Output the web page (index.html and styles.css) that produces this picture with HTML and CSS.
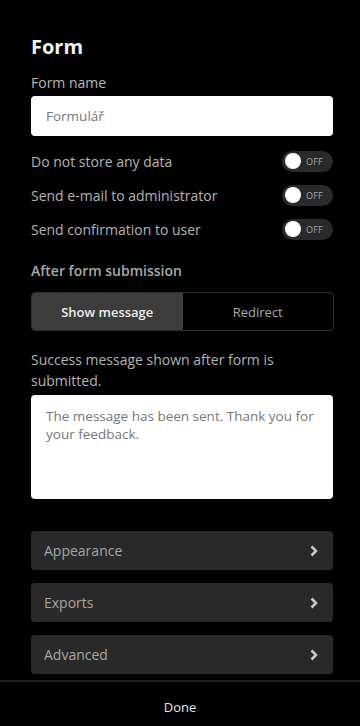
FILE: index.html
```html
<!DOCTYPE html>
<html lang="en">
<head>
<meta charset="utf-8">
<title>Form</title>
<link rel="stylesheet" href="styles.css">
</head>
<body>
<div class="screen">
  <main class="panel">
    <h1 class="title">Form</h1>
    <label class="label">Form name</label>
    <div class="input">Formulář</div>
    <div class="toggles">
      <div class="toggle-row"><span>Do not store any data</span><span class="switch"><span class="knob"></span><span class="off">OFF</span></span></div>
      <div class="toggle-row"><span>Send e-mail to administrator</span><span class="switch"><span class="knob"></span><span class="off">OFF</span></span></div>
      <div class="toggle-row"><span>Send confirmation to user</span><span class="switch"><span class="knob"></span><span class="off">OFF</span></span></div>
    </div>
    <div class="section-label">After form submission</div>
    <div class="segment">
      <div class="seg active">Show message</div>
      <div class="seg">Redirect</div>
    </div>
    <p class="desc">Success message shown after form is submitted.</p>
    <div class="textarea">The message has been sent. Thank you for your feedback.</div>
    <div class="items">
      <div class="item"><span>Appearance</span><svg class="chev" viewBox="0 0 10 12" width="10" height="12"><path d="M2.5 1.5 L7 6 L2.5 10.5" fill="none" stroke="#c8c8c8" stroke-width="2.6"/></svg></div>
      <div class="item"><span>Exports</span><svg class="chev" viewBox="0 0 10 12" width="10" height="12"><path d="M2.5 1.5 L7 6 L2.5 10.5" fill="none" stroke="#c8c8c8" stroke-width="2.6"/></svg></div>
      <div class="item"><span>Advanced</span><svg class="chev" viewBox="0 0 10 12" width="10" height="12"><path d="M2.5 1.5 L7 6 L2.5 10.5" fill="none" stroke="#c8c8c8" stroke-width="2.6"/></svg></div>
    </div>
  </main>
  <footer class="footer">Done</footer>
</div>
</body>
</html>
```
FILE: styles.css
```css
* { box-sizing: border-box; }
html, body { margin: 0; padding: 0; background: #000; }
body { font-family: "Open Sans", "Noto Sans", sans-serif; color: #bdbdbd; }
.screen { width: 360px; height: 726px; display: flex; flex-direction: column; overflow: hidden; }
.panel { flex: 1; padding: 34px 27px 0 31px; display: flex; flex-direction: column; }
.title { margin: 0; font-size: 20px; line-height: 26px; font-weight: 700; color: #f2f2f2; }
.label { display: block; margin-top: 13px; font-size: 14px; line-height: 20px; color: #b8b8b8; }
.input { margin-top: 3px; height: 40px; background: #fff; border-radius: 4px; padding: 0 15px; display: flex; align-items: center; font-size: 13.5px; color: #777; }
.toggles { margin-top: 15px; display: flex; flex-direction: column; gap: 14px; }
.toggle-row { display: flex; justify-content: space-between; align-items: center; height: 20px; font-size: 14px; color: #b4b4b4; }
.switch { width: 51px; height: 21px; border-radius: 11px; background: #2a2a2a; display: flex; align-items: center; padding-left: 3px; gap: 5px; }
.knob { width: 16px; height: 16px; border-radius: 50%; background: #fff; }
.off { font-size: 9px; color: #a8a8a8; letter-spacing: 0.2px; }
.section-label { margin-top: 22px; font-size: 14px; line-height: 20px; font-weight: 600; color: #a8a8a8; }
.segment { margin-top: 11px; height: 39px; display: flex; border: 1px solid #2e2e2e; border-radius: 4px; overflow: hidden; margin-right: -1px; }
.seg { flex: 1; display: flex; align-items: center; justify-content: center; font-size: 13px; color: #a8a8a8; }
.seg.active { background: #3c3c3c; color: #ececec; font-weight: 600; }
.desc { margin: 18px 0 0; font-size: 14px; line-height: 21px; color: #b4b4b4; }
.textarea { margin-top: 4px; height: 104px; background: #fff; border-radius: 4px; padding: 12px 15px; font-size: 13.5px; line-height: 18px; color: #777; }
.items { margin-top: 32px; display: flex; flex-direction: column; gap: 13px; }
.item { height: 39px; background: #292929; border-radius: 4px; display: flex; align-items: center; justify-content: space-between; padding: 0 14px 0 13px; font-size: 14px; color: #a6a6a6; }
.chev { display: block; }
.footer { flex: none; height: 46px; border-top: 2px solid #1e1e1e; padding-top: 5px; display: flex; align-items: center; justify-content: center; font-size: 13px; color: #e6e6e6; }
```
